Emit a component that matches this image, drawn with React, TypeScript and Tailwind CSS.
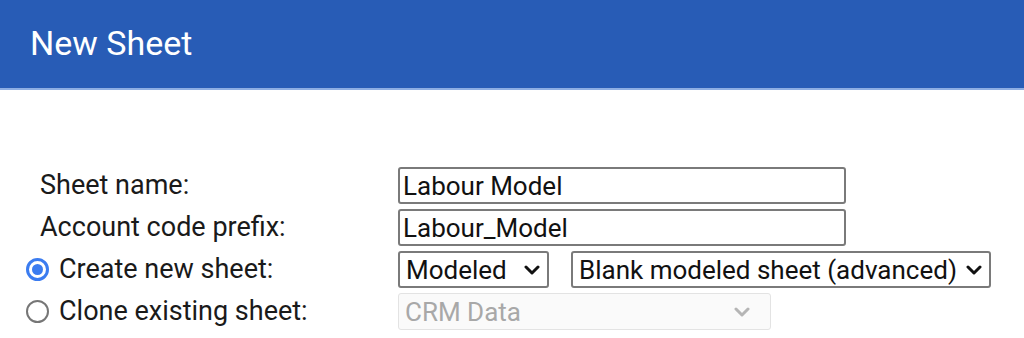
import React from "react";

const font = { fontFamily: "Roboto, 'Liberation Sans', sans-serif" };

function Chevron({ disabled }: { disabled?: boolean }) {
  return (
    <svg width="16" height="10" viewBox="0 0 16 10" className="shrink-0">
      <path
        d="M2 2 L8 8 L14 2"
        fill="none"
        stroke={disabled ? "#b5b5b5" : "#111"}
        strokeWidth="3"
        strokeLinecap="round"
        strokeLinejoin="round"
      />
    </svg>
  );
}

function Radio({ checked }: { checked?: boolean }) {
  if (checked) {
    return (
      <span className="flex h-[23px] w-[23px] shrink-0 items-center justify-center rounded-full border-[3px] border-[#3b7cf0] bg-white">
        <span className="h-[11px] w-[11px] rounded-full bg-[#3b7cf0]" />
      </span>
    );
  }
  return <span className="h-[23px] w-[23px] shrink-0 rounded-full border-[2px] border-[#767676] bg-white" />;
}

function TextBox({ value }: { value: string }) {
  return (
    <div className="flex h-[37px] w-[448px] items-center rounded-[3px] border-[2px] border-[#7a7a7a] bg-white px-[3px] text-[26px] leading-none text-[#111]">
      {value}
    </div>
  );
}

function SelectBox({
  value,
  width,
  disabled,
}: {
  value: string;
  width: string;
  disabled?: boolean;
}) {
  return (
    <div
      className={`flex h-[37px] items-center justify-between rounded-[3px] px-[6px] text-[26px] leading-none ${width} ${
        disabled
          ? "border-[1.5px] border-[#e3e3e3] bg-[#fafafa] text-[#a8a8a8]"
          : "border-[2px] border-[#7a7a7a] bg-white text-[#111]"
      }`}
    >
      <span className="whitespace-nowrap">{value}</span>
      <span className={disabled ? "pr-[14px]" : "pr-[1px]"}>
        <Chevron disabled={disabled} />
      </span>
    </div>
  );
}

export default function App() {
  return (
    <div className="h-[338px] w-[1024px] overflow-hidden bg-white" style={font}>
      <div className="flex h-[90px] items-center border-b-[2px] border-[#8eaee3] bg-[#285cb6] pb-[2px] pl-[30px]">
        <h1 className="text-[34px] font-normal text-white">New Sheet</h1>
      </div>

      <div className="flex flex-col gap-[5px] pl-[26px] pt-[77px] text-[27px] leading-none text-[#1a1a1a]">
        <div className="flex h-[37px] items-center">
          <span className="w-[372px] pl-[14px]">Sheet name:</span>
          <TextBox value="Labour Model" />
        </div>
        <div className="flex h-[37px] items-center">
          <span className="w-[372px] pl-[14px]">Account code prefix:</span>
          <TextBox value="Labour_Model" />
        </div>
        <div className="flex h-[37px] items-center">
          <span className="flex w-[372px] items-center gap-[10px]">
            <Radio checked />
            Create new sheet:
          </span>
          <div className="flex items-center gap-[22px]">
            <SelectBox value="Modeled" width="w-[151px]" />
            <SelectBox value="Blank modeled sheet (advanced)" width="w-[420px]" />
          </div>
        </div>
        <div className="flex h-[37px] items-center">
          <span className="flex w-[372px] items-center gap-[10px]">
            <Radio />
            Clone existing sheet:
          </span>
          <SelectBox value="CRM Data" width="w-[373px]" disabled />
        </div>
      </div>
    </div>
  );
}
